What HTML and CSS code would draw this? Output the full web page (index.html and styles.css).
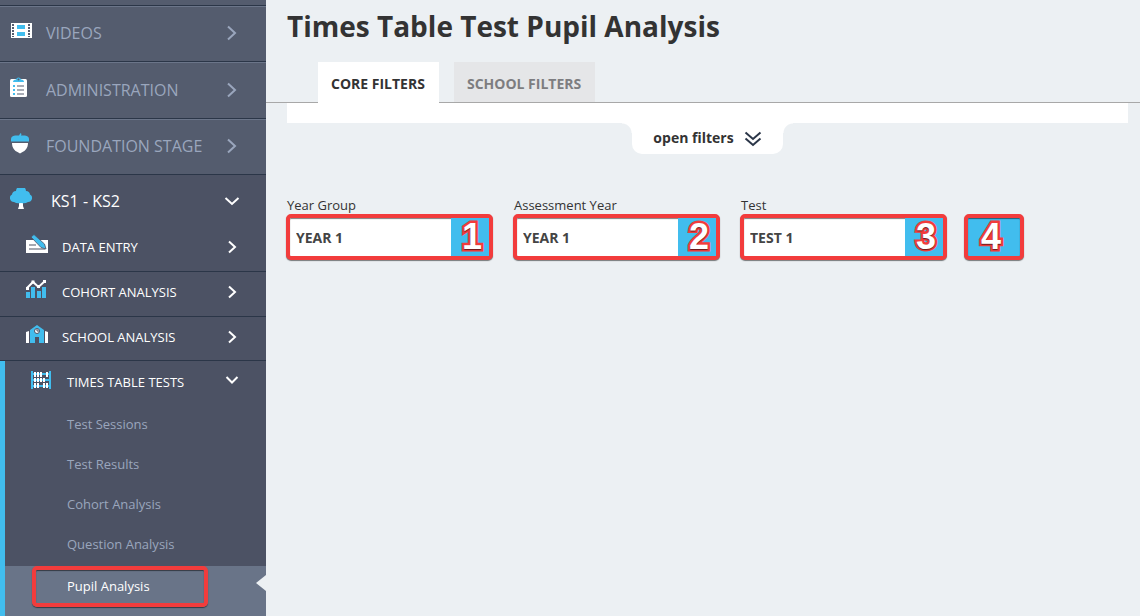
FILE: index.html
```html
<!DOCTYPE html>
<html lang="en">
<head>
    <meta charset="UTF-8">
    <meta name="viewport" content="width=device-width, initial-scale=1.0">
    <title>Times Table Test Pupil Analysis</title>
    <link rel="stylesheet" href="styles.css">
</head>
<body>
    <nav class="sidebar">
        <div class="menu-edge"></div>
        <a class="menu-item" href="#">
            <svg class="icon" viewBox="0 0 22 22">
                <path fill="#fff" d="M1 3h21v15H1z"/>
                <path fill="#41bdee" d="M7 5h8v4H7zM7 12h8v4H7z"/>
                <path fill="#545c6e" d="M2 4h2v2H2zM2 7h2v2H2zM2 10h2v2H2zM2 13h2v2H2zM2 16h2v1H2zM18 4h2v2h-2zM18 7h2v2h-2zM18 10h2v2h-2zM18 13h2v2h-2zM18 16h2v1h-2z"/>
            </svg>
            <span class="label">VIDEOS</span>
            <svg class="chevron" viewBox="0 0 16 16"><path d="M4 1.500l7 6.500-7 6.500"/></svg>
        </a>
        <a class="menu-item" href="#">
            <svg class="icon" viewBox="0 0 22 22">
                <rect x="0" y="2" width="17" height="18" rx="1.500" fill="#fff"/>
                <path fill="#41bdee" d="M3 5q0-2.500 3-2.500a2.600 2.600 0 0 1 5 0q3 0 3 2.500z"/>
                <circle cx="8.500" cy="2.500" r="1" fill="#545c6e"/>
                <path stroke="#41bdee" stroke-width="2" d="M3 9h2M3 13h2M3 17h2"/>
                <path stroke="#545c6e" stroke-width="1.200" d="M7 9h7M7 13h7M7 17h7"/>
            </svg>
            <span class="label">ADMINISTRATION</span>
            <svg class="chevron" viewBox="0 0 16 16"><path d="M4 1.500l7 6.500-7 6.500"/></svg>
        </a>
        <a class="menu-item last" href="#">
            <svg class="icon" viewBox="0 0 22 22">
                <path fill="#41bdee" d="M1 8.500V6q0-3 4-3.500h4L10.500 0l1 1-.5 1.500h4q4 .5 4 3.500v2.500z"/>
                <path fill="#fff" d="M2 10h16c0 5-3 8-5.500 9L10 20.500 7.500 19C5 18 2 15 2 10z"/>
            </svg>
            <span class="label">FOUNDATION STAGE</span>
            <svg class="chevron" viewBox="0 0 16 16"><path d="M4 1.500l7 6.500-7 6.500"/></svg>
        </a>
        <a class="menu-item open" href="#">
            <svg class="icon" viewBox="0 0 22 22">
                <path fill="#fff" d="M9 14h4v4l1 3H8l1-3z"/>
                <path fill="#41bdee" d="M4 14a4 4 0 0 1-2-7.500A4 4 0 0 1 6 3a5 5 0 0 1 10 0 4 4 0 0 1 4 3.500A4 4 0 0 1 18 14q-3 2-7 1Q7 16 4 14z"/>
            </svg>
            <span class="label">KS1 - KS2</span>
            <svg class="chevron" viewBox="0 0 16 16"><path d="M1.500 5l6.500 6 6.500-6"/></svg>
        </a>
        <a class="sub-item" href="#">
            <svg class="icon" viewBox="0 0 22 22">
                <path fill="#fff" d="M0 6h22v13H0z"/>
                <path stroke="#4c5264" stroke-width="1.200" d="M3 11h7M3 15h16"/>
                <path fill="#41bdee" stroke="#4c5264" stroke-width=".8" d="M5 3l3-2.500L18.500 10l1.500 5-5-1.500z"/>
            </svg>
            <span class="label">DATA ENTRY</span>
            <svg class="chevron" viewBox="0 0 16 16"><path d="M5 2.500l6 5.500-6 5.500"/></svg>
        </a>
        <a class="sub-item" href="#">
            <svg class="icon" viewBox="0 0 22 22">
                <path fill="#41bdee" d="M0 13h4v6H0zM5 8h4v11H5zM11 12h4v7h-4zM16 8h4v11h-4z"/>
                <path fill="none" stroke="#fff" stroke-width="2" d="M1 9l6-6 5.500 5L19 2"/>
                <path fill="#fff" d="M0 8h3v3H0zM5.500 1.500h3v3h-3zM11 6h3v3h-3zM17 1h3v3h-3z"/>
            </svg>
            <span class="label">COHORT ANALYSIS</span>
            <svg class="chevron" viewBox="0 0 16 16"><path d="M5 2.500l6 5.500-6 5.500"/></svg>
        </a>
        <a class="sub-item short" href="#">
            <svg class="icon" viewBox="0 0 22 22">
                <path fill="#fff" d="M0 8l3-1v12H0zM19 7l3 1v11h-3z"/>
                <path fill="#41bdee" d="M4 6l7-5 7 5v13h-5v-6H9v6H4z"/>
                <circle cx="11" cy="7" r="2.500" fill="#fff" stroke="#4c5264"/>
                <path stroke="#4c5264" fill="none" d="M11 5v2h2"/>
            </svg>
            <span class="label">SCHOOL ANALYSIS</span>
            <svg class="chevron" viewBox="0 0 16 16"><path d="M5 2.500l6 5.500-6 5.500"/></svg>
        </a>
        <div class="current">
            <a class="sub-item open" href="#">
                <svg class="icon" viewBox="0 0 22 22">
                    <path fill="#41bdee" d="M0 2h2v18H0zM18 2h2v18h-2zM2 4h16v2H2zM2 10h16v2H2zM2 16h16v2H2z"/>
                    <path fill="#fff" d="M3 3h2v5H3zM6 3h2v5H6zM9 3h2v5H9zM15 3h2v5h-2zM3 9h2v4H3zM6 9h2v4H6zM9 9h2v4H9zM12 9h2v4h-2zM3 14h2v5H3zM6 14h2v5H6zM12 14h2v5h-2zM15 14h2v5h-2z"/>
                </svg>
                <span class="label">TIMES TABLE TESTS</span>
                <svg class="chevron" viewBox="0 0 16 16"><path d="M2.500 3l5.500 5.500L13.500 3"/></svg>
            </a>
            <a class="page-link" href="#">Test Sessions</a>
            <a class="page-link" href="#">Test Results</a>
            <a class="page-link" href="#">Cohort Analysis</a>
            <a class="page-link" href="#">Question Analysis</a>
            <a class="page-link active" href="#"><span class="marked">Pupil Analysis</span></a>
        </div>
    </nav>
    <main class="content">
        <h1>Times Table Test Pupil Analysis</h1>
        <div class="tabs">
            <button class="tab selected" type="button">CORE FILTERS</button>
            <button class="tab" type="button">SCHOOL FILTERS</button>
        </div>
        <div class="panel-wrap">
            <div class="panel"></div>
            <button class="open-filters" type="button">
                open filters
                <svg class="double-chevron" viewBox="0 0 18 16"><path d="M1.500 1.500L9 8l7.500-6.500M1.500 7.500L9 14l7.500-6.500"/></svg>
            </button>
        </div>
        <form class="filters">
            <div class="field">
                <label for="year-group">Year Group</label>
                <div class="select-box">
                    <select id="year-group"><option>YEAR 1</option></select>
                    <span class="step">1</span>
                </div>
            </div>
            <div class="field">
                <label for="assessment-year">Assessment Year</label>
                <div class="select-box">
                    <select id="assessment-year"><option>YEAR 1</option></select>
                    <span class="step">2</span>
                </div>
            </div>
            <div class="field">
                <label for="test">Test</label>
                <div class="select-box">
                    <select id="test"><option>TEST 1</option></select>
                    <span class="step">3</span>
                </div>
            </div>
            <button class="go" type="button"><span class="step">4</span></button>
        </form>
    </main>
</body>
</html>
```
FILE: styles.css
```css
* {
    box-sizing: border-box;
}
body {
    margin: 0;
    min-height: 100vh;
    display: flex;
    background-color: #ecf0f3;
    color: #333;
    font-family: "Open Sans", "Noto Sans", sans-serif;
    font-size: 13px;
}
a {
    text-decoration: none;
}
button, select {
    font-family: inherit;
    border: 0;
}

/* sidebar */
.sidebar {
    flex: 0 0 266px;
    display: flex;
    flex-direction: column;
    background-color: #4c5264;
}
.menu-edge {
    height: 6px;
    background-color: #545c6e;
    border-bottom: 1px solid #2b3648;
}
.menu-item, .sub-item {
    display: flex;
    align-items: center;
}
.menu-item {
    height: 56px;
    padding: 0 26px 2px 10px;
    background-color: #545c6e;
    border-top: 1px solid #6b7589;
    border-bottom: 1px solid #2b3648;
    color: #9aa6bd;
    font-size: 16px;
}
.menu-item + .menu-item {
    height: 57px;
}
.menu-item.last {
    height: 56px;
}
.menu-item .label {
    padding-left: 14px;
}
.menu-item.open.open {
    height: 52px;
    padding-bottom: 0;
    background-color: #4c5264;
    border: 0;
    color: #fff;
}
.menu-item.open .label {
    padding-left: 19px;
}
.icon {
    width: 22px;
    height: 22px;
    flex: none;
    margin-bottom: 4px;
}
.chevron {
    width: 16px;
    height: 16px;
    flex: none;
    margin-left: auto;
    fill: none;
    stroke: currentColor;
    stroke-width: 2;
}
.sub-item {
    height: 45px;
    padding: 0 26px 4px 26px;
    border-bottom: 1px solid #2b3648;
    color: #fff;
}
.sub-item.short {
    height: 44px;
}
.sub-item .label {
    padding-left: 14px;
}
.sub-item.open {
    height: 43px;
    border: 0;
    padding-bottom: 2px;
}
.current {
    flex: 1;
    display: flex;
    flex-direction: column;
    border-left: 5px solid #41bdee;
}
.page-link {
    height: 40px;
    line-height: 40px;
    padding-left: 62px;
    color: #9aa6bd;
}
.page-link.active {
    position: relative;
    flex: 1;
    min-height: 50px;
    margin-top: 2px;
    padding-left: 27px;
    background-color: #697488;
    color: #fff;
}
.page-link.active::after {
    content: "";
    position: absolute;
    right: 0;
    top: 9px;
    border: 8px solid transparent;
    border-left-width: 0;
    border-right: 10px solid #ecf0f3;
}
.marked {
    display: block;
    width: 176px;
    height: 41px;
    line-height: 33px;
    padding-left: 31px;
    border: 4px solid #f23c3c;
    border-radius: 5px;
    box-shadow: 0 1px 1px rgba(0, 0, 0, 0.5), inset 0 1px 1px rgba(0, 0, 0, 0.5);
}

/* content */
.content {
    flex: 1;
    min-width: 0;
}
h1 {
    margin: 0;
    padding: 6px 0 0 21px;
    font-size: 28px;
    line-height: 40px;
}
.tabs {
    display: flex;
    gap: 15px;
    margin-top: 16px;
    padding-left: 52px;
    border-bottom: 1px solid #a8a8a8;
}
.tab {
    height: 40px;
    padding: 2px 14px 0 13px;
    background-color: #e5e6e8;
    color: #7d7d80;
    font-size: 14px;
    font-weight: bold;
}
.tab.selected {
    height: 41px;
    margin-bottom: -1px;
    background-color: #fff;
    color: #333;
}
.panel-wrap {
    margin: 0 12px 0 21px;
}
.panel {
    height: 20px;
    background-color: #fff;
}
.open-filters {
    position: relative;
    display: flex;
    align-items: center;
    justify-content: center;
    gap: 10px;
    width: 151px;
    height: 31px;
    margin: 0 auto;
    padding: 0 0 2px;
    background-color: #fff;
    border-radius: 0 0 10px 10px;
    color: #333;
    font-size: 14px;
    font-weight: bold;
}
/* curved joins between the panel and the button */
.open-filters::before, .open-filters::after {
    content: "";
    position: absolute;
    top: 0;
    width: 10px;
    height: 10px;
}
.open-filters::before {
    right: 100%;
    background: radial-gradient(circle at 0 100%, transparent 9px, #fff 10px);
}
.open-filters::after {
    left: 100%;
    background: radial-gradient(circle at 100% 100%, transparent 9px, #fff 10px);
}
.double-chevron {
    width: 18px;
    height: 16px;
    margin-top: 2px;
    fill: none;
    stroke: #2b3648;
    stroke-width: 2;
}
.filters {
    display: flex;
    align-items: flex-end;
    gap: 20px;
    margin-top: 42px;
    padding-left: 20px;
}
.field label {
    display: block;
    padding-left: 1px;
    line-height: 18px;
}
.select-box, .go {
    position: relative;
    height: 46px;
    border: 4px solid #f23c3c;
    border-radius: 5px;
    box-shadow: 0 1px 1px rgba(0, 0, 0, 0.5), inset 0 1px 1px rgba(0, 0, 0, 0.5);
}
.select-box {
    width: 207px;
    background-color: #fff;
}
.select-box select {
    width: 100%;
    height: 100%;
    padding: 0 48px 0 6px;
    appearance: none;
    background: linear-gradient(#41bdee, #41bdee) right / 38px 100% no-repeat;
    color: #444;
    font-size: 14px;
    font-weight: bold;
}
.step {
    color: #fff;
    font-family: "Liberation Sans", Arial, sans-serif;
    font-size: 36px;
    font-weight: bold;
    line-height: 38px;
    -webkit-text-stroke: 5px #f23c3c;
    paint-order: stroke fill;
    text-shadow: 0 1px 1px rgba(0, 0, 0, 0.6);
}
.select-box .step {
    position: absolute;
    right: 7px;
    top: 0;
    pointer-events: none;
}
.go {
    width: 60px;
    margin-left: -3px;
    padding: 0 6px 0 0;
    background-color: #41bdee;
}
```
